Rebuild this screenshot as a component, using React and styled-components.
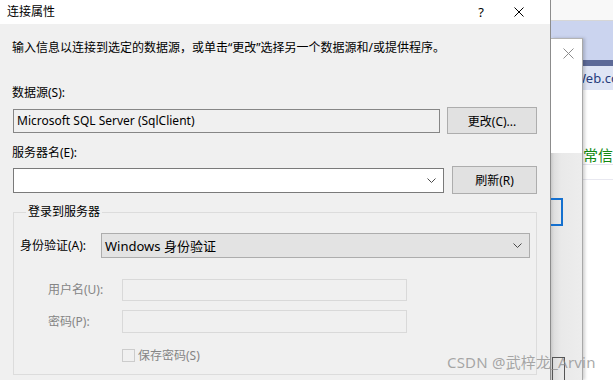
import React from "react";
import styled, { createGlobalStyle } from "styled-components";

const Global = createGlobalStyle`
  html, body { margin: 0; padding: 0; background: #fff; }
  body { font-family: "Segoe UI", "Noto Sans", "Noto Sans CJK SC", sans-serif; }
  * { box-sizing: border-box; }
`;

const FONT = `"Segoe UI", "Noto Sans", "Noto Sans CJK SC", sans-serif`;

const Screen = styled.div`
  position: relative;
  width: 613px;
  height: 380px;
  overflow: hidden;
  display: flex;
  font-family: ${FONT};
  font-size: 12px;
`;

const Dialog = styled.div`
  width: 551px;
  flex: none;
  display: flex;
  flex-direction: column;
  background: #f0f0f0;
  border-right: 1px solid #8c8c8c;
  position: relative;
  z-index: 2;
`;

const TitleBar = styled.div`
  height: 24px;
  background: #fff;
  display: flex;
  align-items: center;
  padding-left: 7px;
`;

const Title = styled.div`
  flex: 1;
  font-size: 12px;
  line-height: 16px;
  color: #000;
`;

const TitleBtn = styled.div`
  width: ${(p) => p.$w}px;
  display: flex;
  align-items: center;
  justify-content: center;
  font-size: 13px;
  line-height: 16px;
  color: #000;
`;

const Body = styled.div`
  flex: 1;
  display: flex;
  flex-direction: column;
  padding: 16px 0 0 12px;
`;

const Text = styled.div`
  line-height: 16px;
  height: 16px;
  white-space: nowrap;
  color: ${(p) => (p.$disabled ? "#858585" : "#000")};
  margin-top: ${(p) => p.$mt || 0}px;
`;

const Row = styled.div`
  display: flex;
  align-items: center;
  margin-top: ${(p) => p.$mt || 0}px;
  margin-left: ${(p) => p.$ml || 0}px;
  height: ${(p) => p.$h}px;
`;

const ReadOnlyBox = styled.div`
  width: ${(p) => p.$w}px;
  height: 24px;
  margin-left: 1px;
  border: 1px solid #868686;
  background: #f0f0f0;
  display: flex;
  align-items: center;
  padding-left: 3px;
  color: #000;
  white-space: nowrap;
`;

const Combo = styled.div`
  width: ${(p) => p.$w}px;
  height: 25px;
  margin-left: ${(p) => p.$ml || 0}px;
  border: 1px solid ${(p) => (p.$list ? "#adadad" : "#7a7a7a")};
  background: ${(p) => (p.$list ? "#e3e3e3" : "#fff")};
  display: flex;
  align-items: center;
  padding: 0 7px 0 3px;
  color: #000;
  white-space: nowrap;
`;

const ComboText = styled.span`
  flex: 1;
  font-size: ${(p) => p.$fs || 12}px;
`;

const Button = styled.div`
  width: ${(p) => p.$w}px;
  height: ${(p) => p.$h}px;
  margin-left: ${(p) => p.$ml}px;
  border: 1px solid #adadad;
  background: #e1e1e1;
  display: flex;
  align-items: center;
  justify-content: center;
  color: #000;
  white-space: nowrap;
`;

const Group = styled.fieldset`
  margin: 10px 0 0 1px;
  width: 524px;
  border: 1px solid #dcdcdc;
  padding: 0 0 12px 6px;
  display: flex;
  flex-direction: column;
  min-width: 0;
`;

const Legend = styled.legend`
  margin-left: 6px;
  padding: 0 2px;
  line-height: 16px;
  font-size: 12px;
  color: #000;
`;

const Label = styled.div`
  width: ${(p) => p.$w}px;
  margin-left: ${(p) => p.$ml || 0}px;
  line-height: 16px;
  white-space: nowrap;
  color: ${(p) => (p.$disabled ? "#858585" : "#000")};
`;

const DisabledInput = styled.div`
  width: 285px;
  height: ${(p) => p.$h}px;
  border: 1px solid #d9d9d9;
  background: #f0f0f0;
`;

const CheckBox = styled.div`
  width: 13px;
  height: 13px;
  border: 1px solid #cccccc;
  background: #f0f0f0;
  margin-right: 3px;
`;

const Desktop = styled.div`
  flex: 1;
  position: relative;
  display: flex;
  flex-direction: column;
  background: #fff;
`;

const Band = styled.div`
  height: ${(p) => p.$h}px;
  flex: none;
  background: ${(p) => p.$bg};
  border-bottom: ${(p) => (p.$line ? `1px solid ${p.$line}` : "none")};
  display: flex;
  align-items: center;
  padding-left: ${(p) => p.$pl || 22}px;
  overflow: hidden;
  white-space: nowrap;
  color: ${(p) => p.$color || "#000"};
  font-size: ${(p) => p.$fs || 12}px;
  line-height: 16px;
`;

const SideWindow = styled.div`
  position: absolute;
  left: 0;
  top: 38px;
  width: 32px;
  bottom: 0;
  border-top: 1px solid #b4b4b4;
  border-right: 1px solid #a8a8a8;
  box-shadow: 2px 0 3px rgba(0, 0, 0, 0.18);
  display: flex;
  flex-direction: column;
`;

const SideTop = styled.div`
  height: 114px;
  background: #fff;
  display: flex;
  justify-content: center;
  padding-top: 9px;
  padding-left: 4px;
`;

const SideBody = styled.div`
  flex: 1;
  position: relative;
  background: linear-gradient(90deg, #c9c9c9 0px, #dedede 3px, #e9e9e9 10px, #ededed 100%);
`;

const FocusRect = styled.div`
  position: absolute;
  left: -6px;
  top: 45px;
  width: 18px;
  height: 28px;
  border: 2px solid #1470cf;
`;

const SmallRect = styled.div`
  position: absolute;
  left: 1px;
  top: 204px;
  width: 13px;
  height: 30px;
  border: 1px solid #555;
  border-bottom: none;
`;

const Watermark = styled.div`
  position: absolute;
  left: 447px;
  top: 352px;
  z-index: 5;
  font-size: 15px;
  line-height: 20px;
  color: rgba(140, 140, 140, 0.75);
  white-space: nowrap;
  letter-spacing: 0.2px;
`;

const Chevron = () => (
  <svg width="9" height="5" viewBox="0 0 9 5">
    <polyline points="0.5,0.5 4.5,4.5 8.5,0.5" fill="none" stroke="#4a4a4a" strokeWidth="1" />
  </svg>
);

const Cross = ({ size, color }) => (
  <svg width={size} height={size} viewBox={`0 0 ${size} ${size}`}>
    <line x1="0.5" y1="0.5" x2={size - 0.5} y2={size - 0.5} stroke={color} strokeWidth="1" />
    <line x1={size - 0.5} y1="0.5" x2="0.5" y2={size - 0.5} stroke={color} strokeWidth="1" />
  </svg>
);

export default function App() {
  return (
    <Screen>
      <Global />
      <Dialog>
        <TitleBar>
          <Title>连接属性</Title>
          <TitleBtn $w={14}>?</TitleBtn>
          <TitleBtn $w={62}>
            <Cross size={10} color="#000" />
          </TitleBtn>
        </TitleBar>
        <Body>
          <Text>输入信息以连接到选定的数据源，或单击“更改”选择另一个数据源和/或提供程序。</Text>
          <Text $mt={29}>数据源(S):</Text>
          <Row $mt={6} $h={27}>
            <ReadOnlyBox $w={427}>Microsoft SQL Server (SqlClient)</ReadOnlyBox>
            <Button $w={90} $h={27} $ml={7}>更改(C)...</Button>
          </Row>
          <Text $mt={11}>服务器名(E):</Text>
          <Row $mt={5} $h={28}>
            <Combo $w={431} $ml={1}>
              <ComboText />
              <Chevron />
            </Combo>
            <Button $w={85} $h={28} $ml={8}>刷新(R)</Button>
          </Row>
          <Group>
            <Legend>登录到服务器</Legend>
            <Row $mt={13} $h={25}>
              <Label $w={81}>身份验证(A):</Label>
              <Combo $w={429} $list>
                <ComboText $fs={13}>Windows 身份验证</ComboText>
                <Chevron />
              </Combo>
            </Row>
            <Row $mt={21} $h={22}>
              <Label $w={74} $ml={28} $disabled>用户名(U):</Label>
              <DisabledInput $h={22} />
            </Row>
            <Row $mt={9} $h={23}>
              <Label $w={74} $ml={28} $disabled>密码(P):</Label>
              <DisabledInput $h={23} />
            </Row>
            <Row $mt={16} $ml={102} $h={13}>
              <CheckBox />
              <Label $disabled>保存密码(S)</Label>
            </Row>
          </Group>
        </Body>
      </Dialog>
      <Desktop>
        <Band $h={21} $bg="#f8f8f8" $line="#d6d6d6" />
        <Band $h={39} $bg="#cbd4ef" />
        <Band $h={6} $bg="#5d6a98" />
        <Band $h={24} $bg="#dfe5f5" $color="#263c7c" $fs={13} $pl={23}>Web.co</Band>
        <Band $h={56} $bg="#fff" />
        <Band $h={19} $bg="#fff" $color="#128a12" $fs={15} $pl={32} $line="#e4e4ee">常信</Band>
        <Band $h={15} $bg="#fff" $line="#e8e8f0" />
        <Band $h={200} $bg="#fff" />
        <SideWindow>
          <SideTop>
            <Cross size={11} color="#8c8c8c" />
          </SideTop>
          <SideBody>
            <FocusRect />
            <SmallRect />
          </SideBody>
        </SideWindow>
      </Desktop>
      <Watermark>CSDN @武梓龙_Arvin</Watermark>
    </Screen>
  );
}
